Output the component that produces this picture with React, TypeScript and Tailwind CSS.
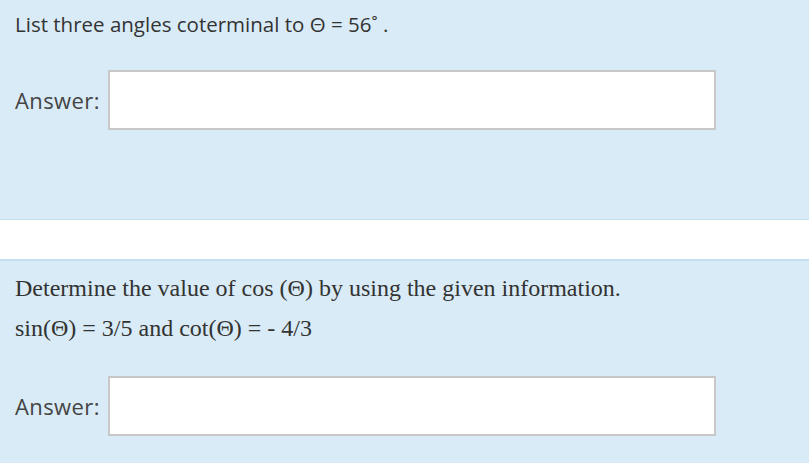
import React from "react";

const sans = { fontFamily: '"Open Sans", sans-serif' };

function AnswerRow() {
  return (
    <div className="flex items-center">
      <span className="w-[108px] pl-[15px] text-[22px] tracking-[0.4px] text-[#444]" style={sans}>
        Answer:
      </span>
      <div className="w-[608px] h-[60px] bg-white border-2 border-[#c8c8c8]" />
    </div>
  );
}

export default function App() {
  return (
    <div className="w-[809px] h-[463px] bg-white overflow-hidden">
      <div className="h-[220px] bg-[#d9ebf6] border-b border-[#c2e0f0]">
        <div className="pl-[15px] pt-[8px] text-[20.5px] leading-[32px] text-[#333]" style={sans}>
          List three angles coterminal to Θ = 56˚ .
        </div>
        <div className="mt-[30px]">
          <AnswerRow />
        </div>
      </div>
      <div className="h-[39px]" />
      <div className="h-[204px] bg-[#d9ebf6] border-t-2 border-[#c2e0f0]">
        <div
          className="pl-[15px] pt-[7px] text-[24px] leading-[40px] text-[#333]"
          style={{ fontFamily: '"Liberation Serif", serif' }}
        >
          <div>Determine the value of cos (Θ) by using the given information.</div>
          <div>sin(Θ) = 3/5 and cot(Θ) = - 4/3</div>
        </div>
        <div className="mt-[28px]">
          <AnswerRow />
        </div>
      </div>
    </div>
  );
}
